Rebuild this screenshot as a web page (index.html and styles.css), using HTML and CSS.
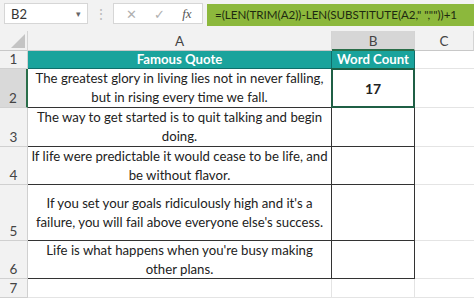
FILE: index.html
```html
<!DOCTYPE html>
<html lang="en">

<head>
    <meta charset="UTF-8">
    <title>Word Count</title>
    <link rel="stylesheet" href="styles.css">
</head>

<body>

    <div class="toolbar">
        <div class="namebox">B2 <span class="caret">&#9662;</span></div>
        <div class="dots">&#8942;</div>
        <div class="fxbox">
            <span class="fx-btn">&#10005;</span>
            <span class="fx-btn">&#10003;</span>
            <span class="fx-btn fx">fx</span>
        </div>
        <div class="formula">=(LEN(TRIM(A2))-LEN(SUBSTITUTE(A2," ",""))+1</div>
    </div>

    <div class="sheet">
        <!-- column headers -->
        <div class="corner"><span class="tri"></span></div>
        <div class="colhead">A</div>
        <div class="colhead sel">B</div>
        <div class="colhead">C</div>

        <!-- row 1 -->
        <div class="rowhead">1</div>
        <div class="cell head">Famous Quote</div>
        <div class="cell head">Word Count</div>
        <div class="cell blank"></div>

        <!-- row 2 -->
        <div class="rowhead sel">2</div>
        <div class="cell">The greatest glory in living lies not in never falling, but in rising every time we fall.</div>
        <div class="cell count active">17</div>
        <div class="cell blank"></div>

        <div class="rowhead">3</div>
        <div class="cell">The way to get started is to quit talking and begin doing.</div>
        <div class="cell count"></div>
        <div class="cell blank"></div>

        <div class="rowhead">4</div>
        <div class="cell">If life were predictable it would cease to be life, and be without flavor.</div>
        <div class="cell count"></div>
        <div class="cell blank"></div>

        <div class="rowhead">5</div>
        <div class="cell">If you set your goals ridiculously high and it's a failure, you will fail above everyone else's success.</div>
        <div class="cell count"></div>
        <div class="cell blank"></div>

        <div class="rowhead">6</div>
        <div class="cell">Life is what happens when you're busy making other plans.</div>
        <div class="cell count"></div>
        <div class="cell blank"></div>

        <div class="rowhead">7</div>
        <div class="cell empty"></div>
        <div class="cell empty"></div>
        <div class="cell blank"></div>
    </div>

</body>

</html>
```

FILE: styles.css
```css
body {
    margin: 0;
    font-family: 'Lato', 'Open Sans', sans-serif;
    background-color: #fff;
    color: #222;
    overflow: hidden;
}

.toolbar {
    height: 31px;
    box-sizing: border-box;
    background-color: #f2f2f2;
    display: flex;
    align-items: flex-start;
    padding: 3px 0 0 4px;
}

.namebox {
    width: 84px;
    height: 21px;
    box-sizing: border-box;
    background: #fff;
    border: 1px solid #d6d6d6;
    display: flex;
    align-items: center;
    justify-content: space-between;
    padding: 0 6px 0 6px;
    font-size: 13px;
    color: #333;
}

.caret {
    font-size: 9px;
    color: #666;
}

.dots {
    width: 25px;
    text-align: center;
    color: #bbb;
    font-size: 14px;
    line-height: 21px;
}

.fxbox {
    width: 90px;
    height: 21px;
    box-sizing: border-box;
    background: #fff;
    border: 1px solid #d6d6d6;
    display: flex;
    align-items: center;
    justify-content: space-around;
    padding: 0 2px 0 4px;
    color: #b0b0b0;
    font-size: 13px;
}

.fx-btn.fx {
    font-family: 'Liberation Serif', serif;
    font-style: italic;
    color: #555;
    font-size: 13px;
}

.formula {
    margin-left: 4px;
    flex: 1;
    height: 22px;
    margin-top: 1px;
    background-color: #8cb83c;
    color: #1e2a10;
    font-size: 11.6px;
    line-height: 22px;
    padding-left: 8px;
    white-space: nowrap;
    overflow: hidden;
}

.sheet {
    display: grid;
    grid-template-columns: 28px 304px 83px 1fr;
    grid-template-rows: 20px 18px 39px 39px 38px 56px 38px 19px;
    font-size: 13.2px;
}

.corner {
    background: #f2f2f2;
    border-right: 1px solid #d4d4d4;
    border-bottom: 1px solid #c8c8c8;
    position: relative;
}

.tri {
    position: absolute;
    right: 2px;
    bottom: 2px;
    width: 0;
    height: 0;
    border-left: 14px solid transparent;
    border-bottom: 14px solid #c4c4c4;
}

.colhead {
    background: #f2f2f2;
    border-right: 1px solid #d4d4d4;
    border-bottom: 1px solid #c8c8c8;
    text-align: center;
    line-height: 20px;
    font-size: 13.5px;
    color: #444;
}

.colhead.sel {
    background: #d6d6d6;
    border-bottom: 2px solid #2a6e4a;
}

.rowhead {
    background: #f2f2f2;
    border-right: 1px solid #d0d0d0;
    border-bottom: 1px solid #d0d0d0;
    display: flex;
    align-items: flex-end;
    justify-content: center;
    font-size: 13.5px;
    color: #444;
    line-height: 18px;
}

.rowhead.sel {
    background: #d9d9d9;
    border-right: 2px solid #2a6e4a;
}

.cell {
    border-right: 1px solid #333;
    border-bottom: 1px solid #333;
    display: flex;
    align-items: center;
    justify-content: center;
    text-align: center;
    line-height: 19px;
    padding: 0 1px;
    box-sizing: border-box;
}

.cell.head {
    background-color: #1aa39c;
    color: #fff;
    font-weight: bold;
    border-color: #106e6a;
    white-space: nowrap;
    line-height: 17px;
}

.cell.count {
    font-weight: bold;
    font-size: 14px;
}

.cell.active {
    border: 2px solid #1f5f45;
    margin: -1px 0 0 -1px;
}

.cell.blank {
    border-right: none;
    border-bottom: 1px solid #e4e4e4;
}

.cell.empty {
    border-right: 1px solid #e4e4e4;
    border-bottom: 1px solid #e4e4e4;
}
```
